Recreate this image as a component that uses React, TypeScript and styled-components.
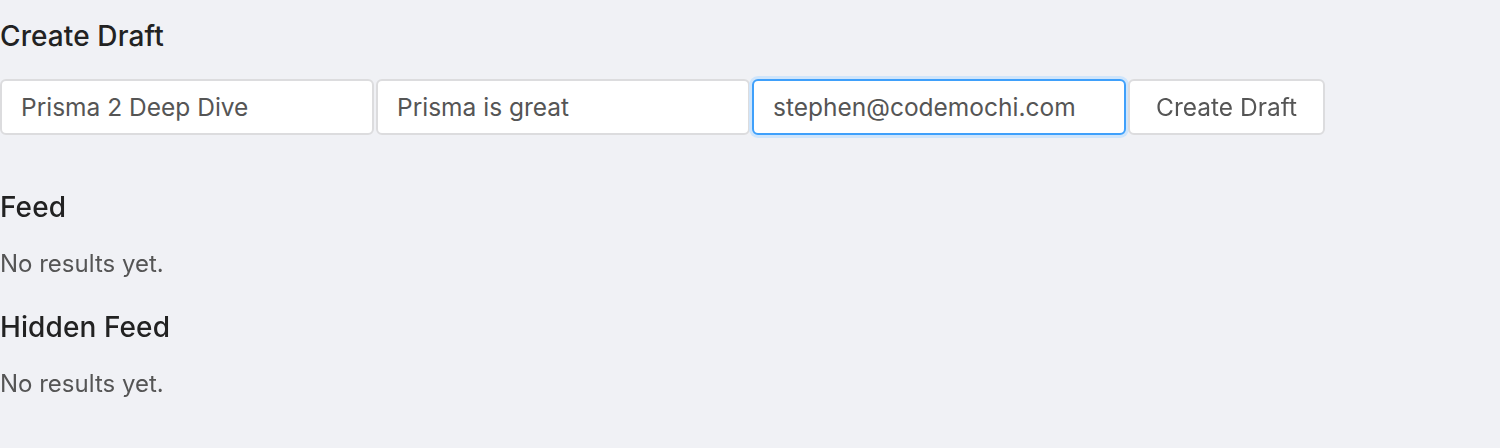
import styled, { createGlobalStyle } from "styled-components";

const GlobalStyle = createGlobalStyle`
    html, body {
        margin: 0;
        padding: 0;
        background: #f0f1f5;
        font-family: Inter, "Noto Sans", "Liberation Sans", sans-serif;
    }
`;

const Page = styled.div`
    display: flex;
    flex-direction: column;
    padding-top: 18px;
`;

const Heading = styled.h2`
    margin: 0;
    font-size: 28px;
    font-weight: 500;
    color: #222;
    line-height: 36px;
    letter-spacing: 0.1px;
`;

const DraftForm = styled.form`
    display: flex;
    align-items: center;
    gap: 2px;
    margin: 25px 0 54px;
`;

const TextInput = styled.input<{ $focused?: boolean }>`
    box-sizing: border-box;
    width: 374px;
    height: 56px;
    padding: 0 19px;
    font-family: inherit;
    font-size: 24.5px;
    color: #555;
    caret-color: #222;
    background: #fff;
    border: 2px solid ${(p) => (p.$focused ? "#3fa0fb" : "#dcdcde")};
    border-radius: 6px;
    outline: none;
    box-shadow: ${(p) => (p.$focused ? "0 0 0 3px #cfe5fb" : "none")};
`;

const SubmitButton = styled.button`
    box-sizing: border-box;
    width: 197px;
    height: 56px;
    padding: 0;
    font-family: inherit;
    font-size: 24.5px;
    color: #555;
    background: #fff;
    border: 2px solid #dcdcde;
    border-radius: 6px;
`;

const Section = styled.section`
    display: flex;
    flex-direction: column;
    gap: 24px;
    margin-bottom: 30px;
`;

const Empty = styled.p`
    margin: 0;
    font-size: 24px;
    color: #555;
    line-height: 30px;
`;

const feeds = ["Feed", "Hidden Feed"];

export default function App() {
    return (
        <>
            <GlobalStyle />
            <Page>
                <Heading>Create Draft</Heading>
                <DraftForm onSubmit={(e) => e.preventDefault()}>
                    <TextInput defaultValue="Prisma 2 Deep Dive" />
                    <TextInput defaultValue="Prisma is great" />
                    <TextInput $focused autoFocus defaultValue="stephen@codemochi.com" />
                    <SubmitButton type="submit">Create Draft</SubmitButton>
                </DraftForm>
                {feeds.map((title) => (
                    <Section key={title}>
                        <Heading>{title}</Heading>
                        <Empty>No results yet.</Empty>
                    </Section>
                ))}
            </Page>
        </>
    );
}
